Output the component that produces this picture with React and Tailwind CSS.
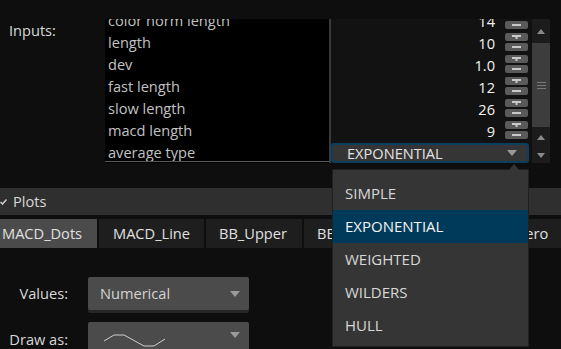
import React from 'react';

const inputs = [
  { name: 'color norm length', value: '14' },
  { name: 'length', value: '10' },
  { name: 'dev', value: '1.0' },
  { name: 'fast length', value: '12' },
  { name: 'slow length', value: '26' },
  { name: 'macd length', value: '9' },
];

const options = ['SIMPLE', 'EXPONENTIAL', 'WEIGHTED', 'WILDERS', 'HULL'];

const Caret = ({ className = '' }) => (
  <svg width="10" height="6" viewBox="0 0 10 6" className={className}>
    <path d="M0 0 L10 0 L5 6 Z" fill="#9a9a9a" />
  </svg>
);

const Spinner = () => (
  <div className="flex flex-col gap-[2px] -mt-[3px]">
    <div className="w-[23px] h-[8px] rounded-[2px] bg-[#5a5a5a] flex items-start justify-center">
      <svg width="9" height="8" viewBox="0 0 9 8">
        <rect x="0" y="2" width="9" height="2" fill="#c8c8c8" />
        <rect x="3.5" y="4" width="2" height="2" fill="#c8c8c8" />
      </svg>
    </div>
    <div className="w-[23px] h-[8px] rounded-[2px] bg-[#5a5a5a] flex items-center justify-center">
      <div className="w-[9px] h-[2px] bg-[#c8c8c8]" />
    </div>
  </div>
);

const ScrollArrow = ({ up }) => (
  <svg width="8" height="5" viewBox="0 0 8 5">
    <path d={up ? 'M0 5 L8 5 L4 0 Z' : 'M0 0 L8 0 L4 5 Z'} fill="#8a8a8a" />
  </svg>
);

const Tab = ({ label, active, className = '' }) => (
  <div
    className={`h-full flex items-center shrink-0 ${active ? 'bg-[#4b4b4b]' : 'bg-[#1e1e1e]'} ${className}`}
  >
    {label}
  </div>
);

export default function App() {
  return (
    <div
      className="relative w-[561px] h-[349px] overflow-hidden bg-[#0e0e0e] text-[14.6px] text-[#d0d0d0]"
      style={{ fontFamily: '"Open Sans", "Liberation Sans", sans-serif' }}
    >
      {/* Inputs */}
      <div className="flex pt-[19px] h-[163px]">
        <div className="w-[105px] shrink-0 pl-[9px] pt-[1px] text-[#d8d8d8] leading-[20px]">Inputs:</div>
        <div className="flex h-[144px]">
          <div className="w-[226px] h-[144px] bg-black border-r-2 border-r-[#3a3a3a] overflow-hidden relative">
            <div className="-mt-[9px]">
              {inputs.map((r) => (
                <div key={r.name} className="h-[22px] flex items-center pl-[3px] text-[#c2c2c2]">
                  {r.name}
                </div>
              ))}
              <div className="h-[22px] flex items-center pl-[3px] text-[#c2c2c2]">average type</div>
            </div>
            <div className="absolute left-0 right-0 bottom-[1px] h-[1px] bg-[#5a5a5a]" />
          </div>
          <div className="w-[200px] h-[144px] bg-[#121212] overflow-hidden">
            <div className="-mt-[9px]">
              {inputs.map((r) => (
                <div key={r.name} className="h-[22px] flex items-center justify-end pr-[3px]">
                  <span className="text-[#f2f2f2] leading-[22px]">{r.value}</span>
                  <div className="ml-[10px]">
                    <Spinner />
                  </div>
                </div>
              ))}
              <div className="h-[22px] pr-[2px] pt-[1px]">
                <div className="h-[20px] border-2 border-[#0b3f60] rounded-[3px] bg-[#353535] flex items-center justify-between pl-[14px] pr-[10px]">
                  <span className="text-[#e4e4e4] leading-none">EXPONENTIAL</span>
                  <Caret />
                </div>
              </div>
            </div>
          </div>
          <div className="w-[18px] h-[144px] bg-[#1c1c1c] flex flex-col items-center ml-[1px]">
            <div className="h-[24px] flex items-center justify-center">
              <ScrollArrow up />
            </div>
            <div className="w-full h-[84px] bg-[#3d3d3d] flex flex-col items-center justify-center gap-[2px]">
              <div className="w-[9px] h-[1px] bg-[#777]" />
              <div className="w-[9px] h-[1px] bg-[#777]" />
              <div className="w-[9px] h-[1px] bg-[#777]" />
            </div>
            <div className="mt-[7px] h-[6px] flex items-center">
              <ScrollArrow up />
            </div>
            <div className="mt-[12px] h-[6px] flex items-center">
              <ScrollArrow />
            </div>
          </div>
        </div>
      </div>

      {/* Plots header */}
      <div className="mt-[25px] h-[27px] bg-[#2f2f2f] flex items-center gap-[6px] text-[#d8d8d8]">
        <svg width="7" height="6" viewBox="0 0 7 6" className="mt-[1px]">
          <path d="M0.5 3 L2.5 5 L6.5 0.5" stroke="#d0d0d0" strokeWidth="1.5" fill="none" />
        </svg>
        <span>Plots</span>
      </div>
      <div className="mt-[4px] h-[29px] flex gap-[2px] text-[#e0e0e0]">
        <Tab label="MACD_Dots" active className="w-[97px] pl-[2px]" />
        <Tab label="MACD_Line" className="w-[105px] pl-[14px]" />
        <Tab label="BB_Upper" className="w-[96px] pl-[13px]" />
        <Tab label="BB_Lower" className="w-[199px] pl-[13px]" />
        <Tab label="Zero" className="w-[60px] pl-[12px]" />
      </div>

      {/* Plot settings */}
      <div className="mt-[29px] flex items-center">
        <div className="w-[68px] text-right text-[#d8d8d8]">Values:</div>
        <div className="ml-[20px] w-[161px] h-[33px] rounded-[2px] bg-[#4b4b4b] flex items-center justify-between pl-[12px] pr-[9px] shadow-[0_3px_0_#262626]">
          <span className="text-[#d4d4d4]">Numerical</span>
          <Caret />
        </div>
      </div>
      <div className="mt-[12px] flex items-start">
        <div className="w-[68px] text-right text-[#d8d8d8] mt-[7px]">Draw as:</div>
        <div className="ml-[20px] w-[161px] h-[33px] rounded-[2px] bg-[#4b4b4b] flex items-center justify-between pl-[15px] pr-[9px]">
          <svg width="64" height="16" viewBox="0 0 64 16" className="mt-[4px]">
            <polyline
              points="1,8 11,2 21,2 41,13 51,13 62,6"
              stroke="#cfcfcf"
              strokeWidth="1"
              fill="none"
            />
          </svg>
          <Caret className="-mt-[8px]" />
        </div>
      </div>

      {/* Dropdown list overlay */}
      <div className="absolute left-[332px] top-[169px] w-[197px] h-[178px] bg-[#353535] border border-[#202020] pt-[7px] text-[15px]">
        <svg width="10" height="6" viewBox="0 0 10 6" className="absolute -top-[6px] left-[176px]">
          <path d="M0 6 L10 6 L5 0 Z" fill="#353535" />
        </svg>
        {options.map((o) => (
          <div
            key={o}
            className={`h-[33px] flex items-center pl-[12px] ${o === 'EXPONENTIAL' ? 'bg-[#003a5a] text-[#f4f4f4]' : 'text-[#d8d8d8]'}`}
          >
            {o}
          </div>
        ))}
      </div>
    </div>
  );
}
